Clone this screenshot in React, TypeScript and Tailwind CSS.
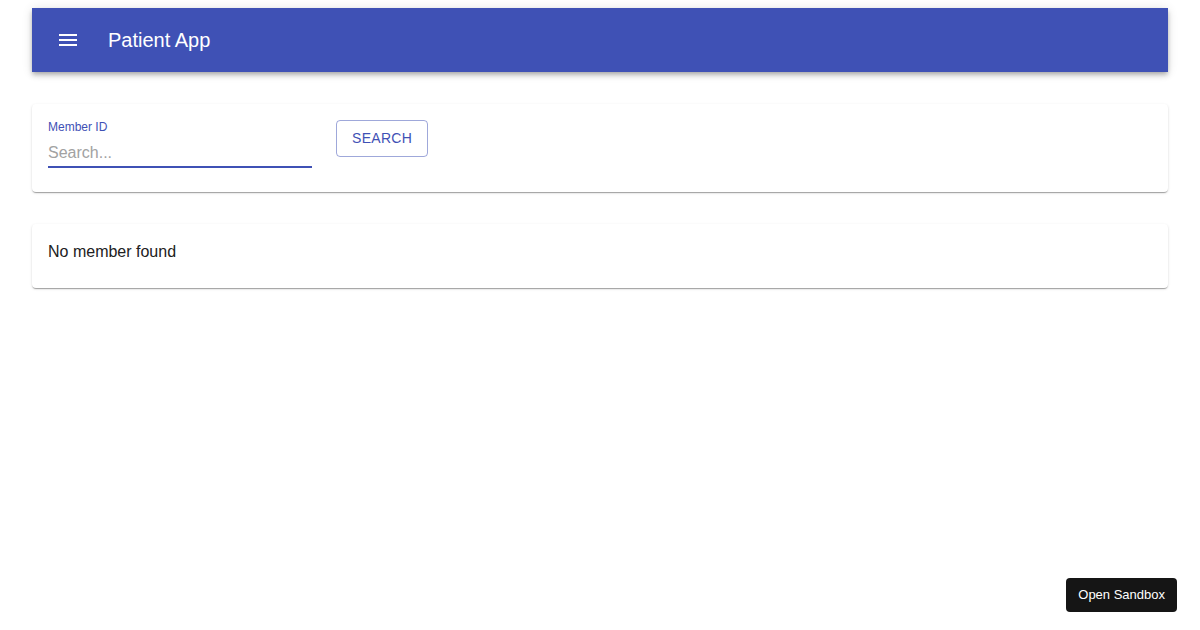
import React from "react";

function MenuIcon() {
    return (
        <svg viewBox="0 0 24 24" className="h-6 w-6" fill="currentColor">
            <path d="M3 18h18v-2H3v2zm0-5h18v-2H3v2zm0-7v2h18V6H3z" />
        </svg>
    );
}

export default function App() {
    return (
        <div
            className="min-h-screen bg-white px-8 pt-2 text-[#212121]"
            style={{ fontFamily: '"Liberation Sans", Arial, sans-serif' }}
        >
            <header className="flex h-16 items-center bg-[#3f51b5] px-6 text-white shadow-[0_2px_4px_-1px_rgba(0,0,0,0.2),0_4px_5px_0_rgba(0,0,0,0.14),0_1px_10px_0_rgba(0,0,0,0.12)]">
                <button className="-ml-3 mr-4 flex h-12 w-12 items-center justify-center rounded-full">
                    <MenuIcon />
                </button>
                <h1 className="text-[20px] font-normal leading-none">Patient App</h1>
            </header>

            <div className="mt-8 rounded bg-white px-4 pb-6 pt-4 shadow-[0_2px_1px_-1px_rgba(0,0,0,0.2),0_1px_1px_0_rgba(0,0,0,0.14),0_1px_3px_0_rgba(0,0,0,0.12)]">
                <div className="flex items-start gap-6">
                    <div className="flex w-[264px] flex-col">
                        <label className="mt-px text-[12px] leading-none text-[#3f51b5]">Member ID</label>
                        <input
                            placeholder="Search..."
                            className="mt-[3px] h-[32px] w-full border-b-2 border-[#3f51b5] pt-[3px] text-[16px] outline-none placeholder:text-[#a2a2a2]"
                        />
                    </div>
                    <button className="h-[37px] rounded border border-[rgba(63,81,181,0.5)] px-[15px] text-[14px] tracking-[0.3px] text-[#3f51b5]">
                        SEARCH
                    </button>
                </div>
            </div>

            <div className="mt-8 rounded bg-white px-4 pb-6 pt-4 shadow-[0_2px_1px_-1px_rgba(0,0,0,0.2),0_1px_1px_0_rgba(0,0,0,0.14),0_1px_3px_0_rgba(0,0,0,0.12)]">
                <p className="text-[16px] leading-6">No member found</p>
            </div>

            <button className="fixed bottom-[18px] right-[23px] h-[34px] rounded bg-[#151515] px-3 text-[13px] text-white">
                Open Sandbox
            </button>
        </div>
    );
}
